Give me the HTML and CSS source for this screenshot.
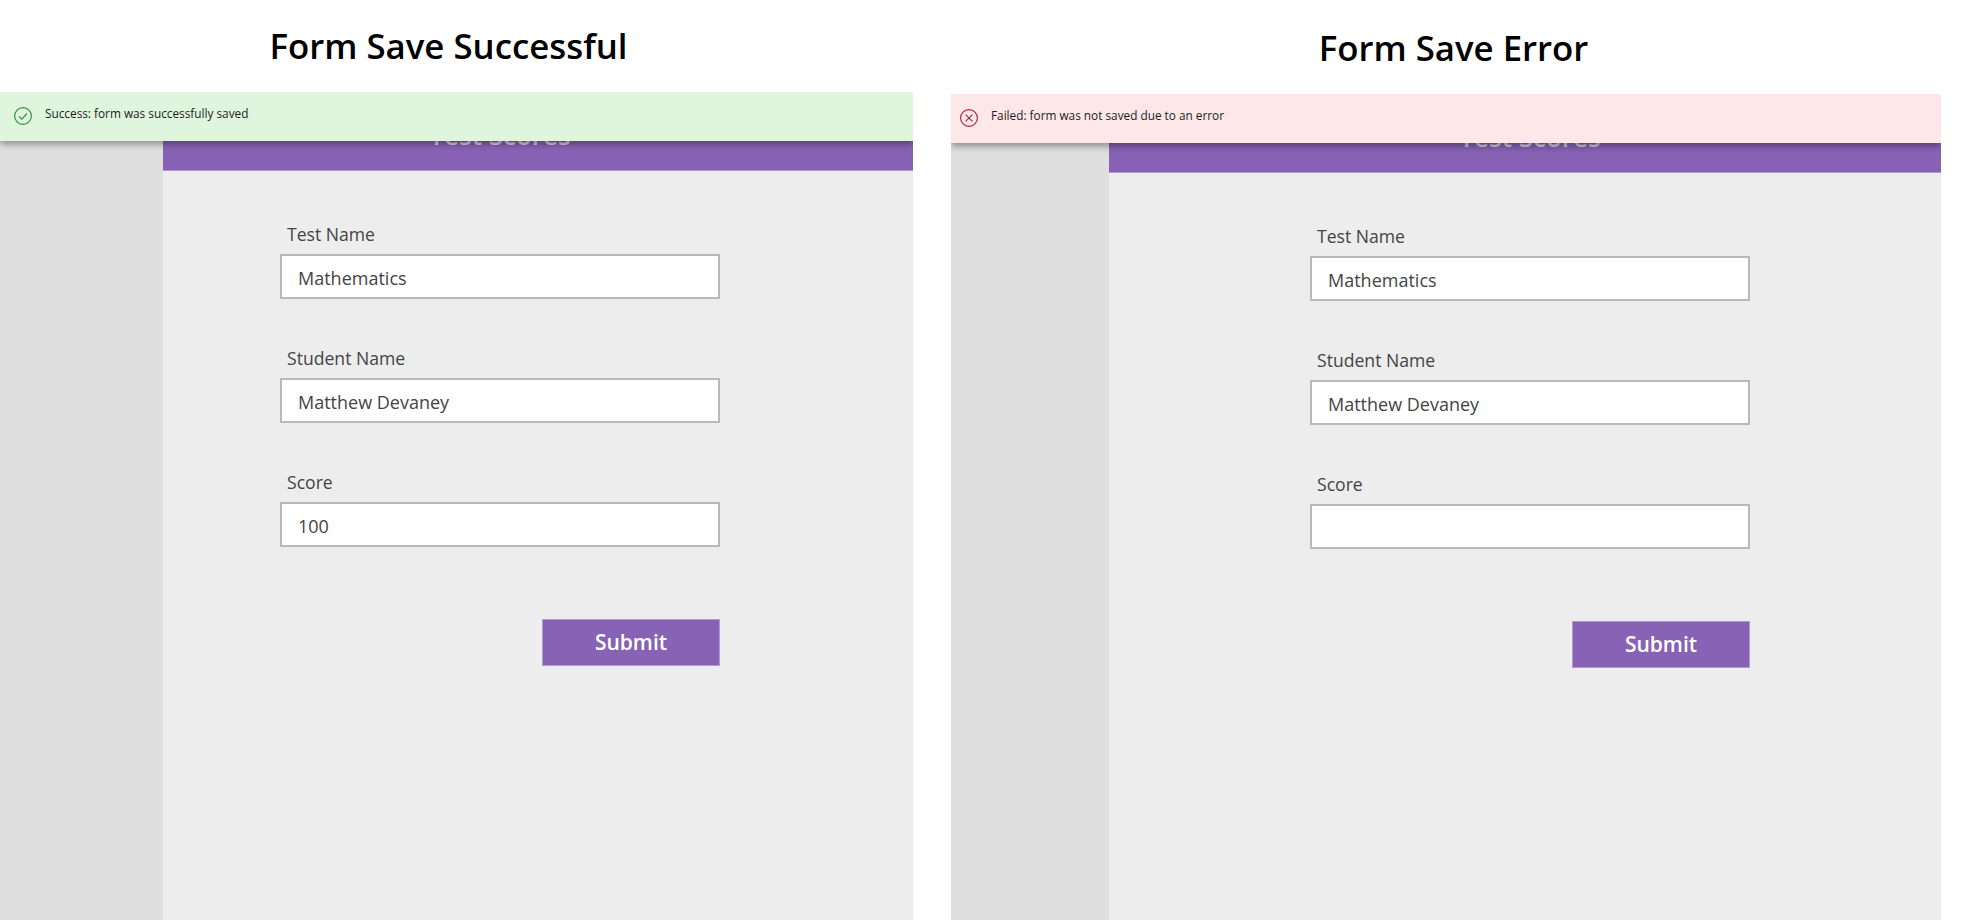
FILE: index.html
```html
<!DOCTYPE html>
<html lang="en">
<head>
<meta charset="utf-8">
<title>Form Save</title>
<link rel="stylesheet" href="styles.css">
</head>
<body>
<div class="page">
  <section class="panel panel-ok">
    <h1 class="title">Form Save Successful</h1>
    <div class="app">
      <div class="banner banner-ok">
        <svg class="banner-icon" viewBox="0 0 18 18" width="18" height="18" aria-hidden="true"><circle cx="9" cy="9" r="8.4" fill="none" stroke="#358f43" stroke-width="1.2"/><path d="M5 9.4l2.8 2.7 5.2-5.6" fill="none" stroke="#358f43" stroke-width="1.2"/></svg>
        <span class="banner-text">Success: form was successfully saved</span>
      </div>
      <aside class="side"></aside>
      <main class="main">
        <header class="app-head"><span class="app-head-text">Test Scores</span></header>
        <form class="form">
          <div class="field"><label class="label">Test Name</label><div class="input">Mathematics</div></div>
          <div class="field"><label class="label">Student Name</label><div class="input">Matthew Devaney</div></div>
          <div class="field"><label class="label">Score</label><div class="input">100</div></div>
          <div class="actions"><div class="submit">Submit</div></div>
        </form>
      </main>
    </div>
  </section>
  <section class="panel panel-err">
    <h1 class="title">Form Save Error</h1>
    <div class="app">
      <div class="banner banner-err">
        <svg class="banner-icon" viewBox="0 0 18 18" width="18" height="18" aria-hidden="true"><circle cx="9" cy="9" r="8.4" fill="none" stroke="#a52c3a" stroke-width="1.2"/><path d="M5.6 5.6l6.8 6.8M12.4 5.6l-6.8 6.8" fill="none" stroke="#a52c3a" stroke-width="1.2"/></svg>
        <span class="banner-text">Failed: form was not saved due to an error</span>
      </div>
      <aside class="side"></aside>
      <main class="main">
        <header class="app-head"><span class="app-head-text">Test Scores</span></header>
        <form class="form">
          <div class="field"><label class="label">Test Name</label><div class="input">Mathematics</div></div>
          <div class="field"><label class="label">Student Name</label><div class="input">Matthew Devaney</div></div>
          <div class="field"><label class="label">Score</label><div class="input"></div></div>
          <div class="actions"><div class="submit">Submit</div></div>
        </form>
      </main>
    </div>
  </section>
</div>
</body>
</html>
```
FILE: styles.css
```css
* { box-sizing: border-box; }
html, body { margin: 0; height: 100%; background: #fff; overflow: hidden; }
body { font-family: "Open Sans", "Noto Sans", sans-serif; }

.page { display: flex; gap: 38px; height: 920px; }
.panel { display: flex; flex-direction: column; height: 100%; }
.panel-ok { width: 913px; }
.panel-err { width: 990px; padding-top: 2px; }

.title {
  height: 92px;
  margin: 0;
  padding-top: 21px;
  font-size: 34.8px;
  line-height: 50px;
  font-weight: 600;
  color: #000;
  text-align: center;
  white-space: nowrap;
}
.panel-ok .title { padding-right: 16px; }
.panel-err .title { padding-left: 15px; }

.app { position: relative; flex: 1; display: flex; min-height: 0; overflow: hidden; }
.side { background: #dfdfdf; flex: none; }
.panel-ok .side { width: 163px; }
.panel-err .side { width: 158px; }
.main { flex: 1; background: #ededed; }

.banner {
  position: absolute;
  z-index: 2;
  top: 0; left: 0; right: 0;
  height: 49px;
  display: flex;
  align-items: flex-start;
  box-shadow: 0 3px 7px rgba(0, 0, 0, .38);
}
.banner-ok { background: #e0f5dd; }
.banner-err { background: #fee7e9; }
.banner-icon { flex: none; margin: 15px 0 0 14px; }
.panel-err .banner-icon { margin-left: 9px; }
.banner-text {
  margin: 12px 0 0 13px;
  font-size: 11.8px;
  line-height: 18px;
  color: #1c1c1c;
  white-space: nowrap;
}

.app-head {
  height: 79px;
  padding-top: 28px;
  background: #8862b5;
  border-bottom: 1px solid #b19ad0;
  color: #d5cce2;
  font-size: 26px;
  line-height: 30px;
  font-weight: 600;
}
.app-head-text { display: block; width: 440px; text-align: center; }
.panel-ok .app-head-text { margin-left: 117px; }
.panel-err .app-head-text { margin-left: 201px; }

.form { width: 440px; padding-top: 43px; }
.panel-ok .form { margin-left: 117px; }
.panel-err .form { margin-left: 201px; }

.field { margin-bottom: 39px; }
.label {
  display: block;
  height: 40px;
  padding-left: 7px;
  font-size: 17.6px;
  line-height: 40px;
  color: #444;
}
.input {
  height: 45px;
  padding: 2px 16px 0;
  background: #fff;
  border: 2px solid #b9b9b9;
  font-size: 18px;
  line-height: 41px;
  color: #444;
}
.actions { display: flex; justify-content: flex-end; padding-top: 33px; }
.submit {
  width: 178px;
  height: 47px;
  background: #8862b5;
  border: 1px solid #b19ad0;
  color: #fff;
  font-size: 21px;
  line-height: 45px;
  font-weight: 600;
  text-align: center;
}
```
